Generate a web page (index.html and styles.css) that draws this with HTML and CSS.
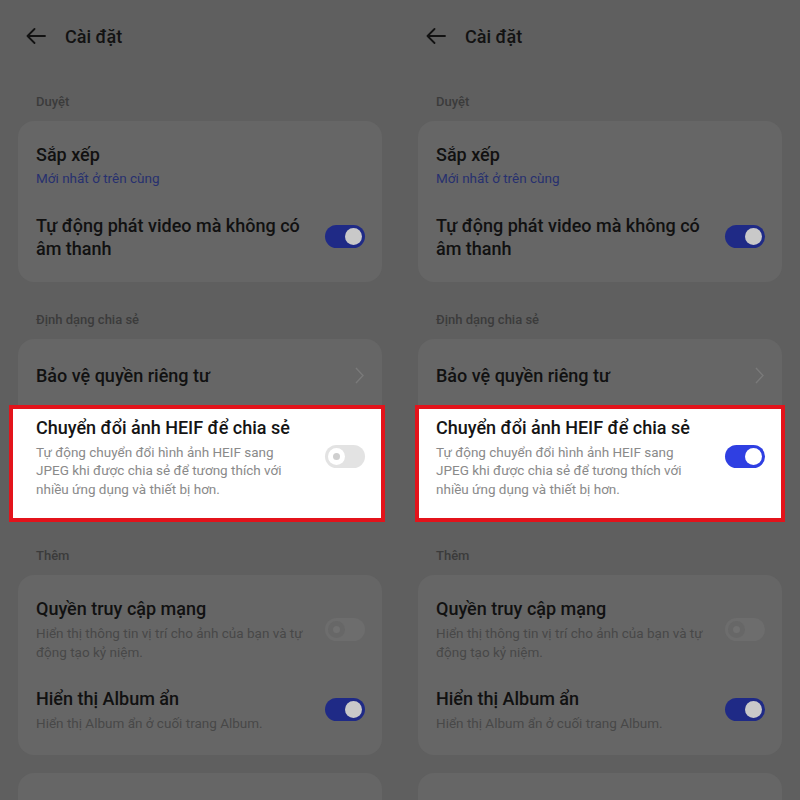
FILE: index.html
```html
<!DOCTYPE html>
<html lang="vi">
<head>
    <meta charset="UTF-8">
    <meta name="viewport" content="width=device-width, initial-scale=1.0">
    <title>Cài đặt - Chuyển đổi ảnh HEIF</title>
    <link rel="stylesheet" href="styles.css">
</head>
<body>
    <div class="screens">
        <section class="screen">
            <div class="topbar">
                <svg class="back" width="20" height="16" viewBox="0 0 20 16"><path d="M19 8H1.5M8.5 1L1.5 8l7 7" fill="none" stroke="#121212" stroke-width="1.8" stroke-linecap="round" stroke-linejoin="round"/></svg>
                <div class="topbar-title">Cài đặt</div>
            </div>
            <div class="section-label section-label--first">Duyệt</div>
            <div class="card">
                <div class="row">
                    <div class="row-text">
                        <div class="row-title">Sắp xếp</div>
                        <div class="row-sub row-sub--link">Mới nhất ở trên cùng</div>
                    </div>
                </div>
                <div class="row">
                    <div class="row-text">
                        <div class="row-title row-title--wrap">Tự động phát video mà không có âm thanh</div>
                    </div>
                    <div class="toggle toggle--on"><span class="knob"></span></div>
                </div>
            </div>
            <div class="section-label">Định dạng chia sẻ</div>
            <div class="card card--flush">
                <div class="row row--link">
                    <div class="row-text">
                        <div class="row-title">Bảo vệ quyền riêng tư</div>
                    </div>
                    <svg class="chevron" width="9" height="17" viewBox="0 0 9 17"><path d="M1 1l7 7.5L1 16" fill="none" stroke="#7a7a7a" stroke-width="1.4"/></svg>
                </div>
                <div class="row row--lit row--lit-left">
                    <div class="row-text">
                        <div class="row-title">Chuyển đổi ảnh HEIF để chia sẻ</div>
                        <div class="row-sub">Tự động chuyển đổi hình ảnh HEIF sang JPEG khi được chia sẻ để tương thích với nhiều ứng dụng và thiết bị hơn.</div>
                    </div>
                    <div class="toggle toggle--off"><span class="knob"><span class="dot"></span></span></div>
                </div>
            </div>
            <div class="section-label">Thêm</div>
            <div class="card">
                <div class="row">
                    <div class="row-text">
                        <div class="row-title">Quyền truy cập mạng</div>
                        <div class="row-sub">Hiển thị thông tin vị trí cho ảnh của bạn và tự động tạo kỷ niệm.</div>
                    </div>
                    <div class="toggle toggle--disabled"><span class="knob"><span class="dot"></span></span></div>
                </div>
                <div class="row">
                    <div class="row-text">
                        <div class="row-title">Hiển thị Album ẩn</div>
                        <div class="row-sub">Hiển thị Album ẩn ở cuối trang Album.</div>
                    </div>
                    <div class="toggle toggle--on"><span class="knob"></span></div>
                </div>
            </div>
            <div class="card card--more"></div>
        </section>

        <section class="screen">
            <div class="topbar">
                <svg class="back" width="20" height="16" viewBox="0 0 20 16"><path d="M19 8H1.5M8.5 1L1.5 8l7 7" fill="none" stroke="#121212" stroke-width="1.8" stroke-linecap="round" stroke-linejoin="round"/></svg>
                <div class="topbar-title">Cài đặt</div>
            </div>
            <div class="section-label section-label--first">Duyệt</div>
            <div class="card">
                <div class="row">
                    <div class="row-text">
                        <div class="row-title">Sắp xếp</div>
                        <div class="row-sub row-sub--link">Mới nhất ở trên cùng</div>
                    </div>
                </div>
                <div class="row">
                    <div class="row-text">
                        <div class="row-title row-title--wrap">Tự động phát video mà không có âm thanh</div>
                    </div>
                    <div class="toggle toggle--on"><span class="knob"></span></div>
                </div>
            </div>
            <div class="section-label">Định dạng chia sẻ</div>
            <div class="card card--flush">
                <div class="row row--link">
                    <div class="row-text">
                        <div class="row-title">Bảo vệ quyền riêng tư</div>
                    </div>
                    <svg class="chevron" width="9" height="17" viewBox="0 0 9 17"><path d="M1 1l7 7.5L1 16" fill="none" stroke="#7a7a7a" stroke-width="1.4"/></svg>
                </div>
                <div class="row row--lit row--lit-right">
                    <div class="row-text">
                        <div class="row-title">Chuyển đổi ảnh HEIF để chia sẻ</div>
                        <div class="row-sub">Tự động chuyển đổi hình ảnh HEIF sang JPEG khi được chia sẻ để tương thích với nhiều ứng dụng và thiết bị hơn.</div>
                    </div>
                    <div class="toggle toggle--on"><span class="knob"></span></div>
                </div>
            </div>
            <div class="section-label">Thêm</div>
            <div class="card">
                <div class="row">
                    <div class="row-text">
                        <div class="row-title">Quyền truy cập mạng</div>
                        <div class="row-sub">Hiển thị thông tin vị trí cho ảnh của bạn và tự động tạo kỷ niệm.</div>
                    </div>
                    <div class="toggle toggle--disabled"><span class="knob"><span class="dot"></span></span></div>
                </div>
                <div class="row">
                    <div class="row-text">
                        <div class="row-title">Hiển thị Album ẩn</div>
                        <div class="row-sub">Hiển thị Album ẩn ở cuối trang Album.</div>
                    </div>
                    <div class="toggle toggle--on"><span class="knob"></span></div>
                </div>
            </div>
            <div class="card card--more"></div>
        </section>
    </div>
</body>
</html>
```

FILE: styles.css
```css
body {
    margin: 0;
    background-color: #5f5f5f;
    font-family: Roboto, "Noto Sans", "DejaVu Sans", sans-serif;
    color: #111111;
}
.screens {
    display: flex;
    height: 800px;
    overflow: hidden;
}
.screen {
    flex: none;
    width: 400px;
}
.topbar {
    height: 72px;
    display: flex;
    align-items: center;
    gap: 19px;
    padding-left: 26px;
}
.topbar-title {
    font-size: 18px;
    font-weight: 500;
    color: #121212;
}
.section-label {
    padding: 29px 36px 10px;
    font-size: 13px;
    font-weight: 500;
    line-height: 18px;
    color: #3b3b3b;
}
.section-label--first {
    padding-top: 21px;
}
.card {
    margin: 0 18px;
    padding: 9px 0;
    background-color: #666666;
    border-radius: 16px;
}
.card--flush {
    padding-bottom: 0;
}
.card--more {
    margin-top: 18px;
    height: 60px;
}
.row {
    display: flex;
    align-items: center;
    gap: 20px;
    padding: 13px 17px 13px 18px;
}
.row-text {
    flex: 1;
    min-width: 0;
}
.row-title {
    font-size: 18px;
    font-weight: 500;
    line-height: 24px;
}
.row-title--wrap {
    line-height: 23px;
}
.row-sub {
    margin-top: 3px;
    font-size: 13.5px;
    line-height: 18.5px;
    color: #484848;
}
.row-sub--link {
    margin-top: 2px;
    color: #27306f;
}
.row--link {
    min-height: 30px;
}
.chevron {
    flex: none;
    margin-right: 1px;
}

/* highlighted row */
.row--lit {
    position: relative;
    margin-top: 5px;
    padding-top: 7px;
    padding-bottom: 20px;
    padding-right: 16px;
    background-color: #ffffff;
}
.row--lit::after {
    content: "";
    position: absolute;
    top: -4px;
    bottom: -4px;
    left: -4px;
    right: -4px;
    border: 4px solid #e3131b;
}
.row--lit-left {
    margin-left: -5px;
    margin-right: 1px;
    padding-left: 23px;
}
.row--lit-right {
    margin-left: 1px;
    margin-right: 1px;
    padding-left: 17px;
}
.row--lit .row-title {
    color: #141414;
}
.row--lit .row-sub {
    color: #8a8a8a;
}

/* toggles */
.toggle {
    flex: none;
    width: 40px;
    height: 23px;
    box-sizing: border-box;
    padding: 3px;
    border-radius: 12px;
    display: flex;
    align-items: center;
}
.knob {
    width: 17px;
    height: 17px;
    border-radius: 50%;
    display: flex;
    align-items: center;
    justify-content: center;
}
.dot {
    width: 7px;
    height: 7px;
    border-radius: 50%;
}
.toggle--on {
    justify-content: flex-end;
    background-color: #1f2a86;
}
.toggle--on .knob {
    background-color: #c9c9c9;
}
.row--lit .toggle--on {
    background-color: #2f3fe2;
}
.row--lit .toggle--on .knob {
    background-color: #ffffff;
}
.toggle--off {
    background-color: #e3e3e3;
}
.toggle--off .knob {
    background-color: #ffffff;
}
.toggle--off .dot {
    background-color: #cfcfcf;
}
.toggle--disabled {
    background-color: #6d6d6d;
}
.toggle--disabled .knob {
    background-color: #676767;
}
.toggle--disabled .dot {
    background-color: #717171;
}
```
